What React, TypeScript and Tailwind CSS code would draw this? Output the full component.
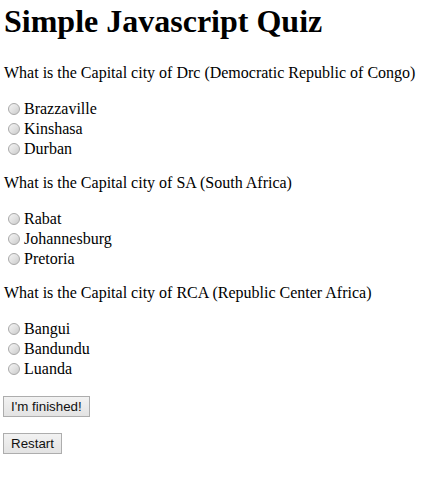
import { useState } from "react";

type Question = { text: string; name: string; options: string[] };

const questions: Question[] = [
  {
    text: "What is the Capital city of Drc (Democratic Republic of Congo)",
    name: "q1",
    options: ["Brazzaville", "Kinshasa", "Durban"],
  },
  {
    text: "What is the Capital city of SA (South Africa)",
    name: "q2",
    options: ["Rabat", "Johannesburg", "Pretoria"],
  },
  {
    text: "What is the Capital city of RCA (Republic Center Africa)",
    name: "q3",
    options: ["Bangui", "Bandundu", "Luanda"],
  },
];

// old-style grey radio bubble
const Radio = ({ checked, onClick }: { checked: boolean; onClick: () => void }) => (
  <span
    onClick={onClick}
    className="ml-[4px] mr-[4px] inline-flex h-[12px] w-[12px] shrink-0 items-center justify-center rounded-full border border-[#a9a9a9] bg-gradient-to-br from-[#f4f4f4] via-[#e2e2e2] to-[#c9c9c9]"
  >
    {checked && <span className="h-[4px] w-[4px] rounded-full bg-[#222]" />}
  </span>
);

const Button = ({ label, onClick }: { label: string; onClick: () => void }) => (
  <button
    onClick={onClick}
    className="h-[21px] border border-[#adadad] bg-gradient-to-b from-[#f2f2f2] to-[#e3e3e3] px-[7px] text-[13.33px] leading-[17px] text-[#111] [font-family:'Liberation_Sans',Arial,sans-serif]"
  >
    {label}
  </button>
);

export default function App() {
  const [answers, setAnswers] = useState<Record<string, string>>({});

  return (
    <div className="min-h-[494px] bg-white pl-[4px] pt-[3px] text-black [font-family:'Liberation_Serif','Times_New_Roman',serif]">
      <h1 className="text-[32px] font-bold leading-[36px]">Simple Javascript Quiz</h1>
      <div className="mt-[24px] flex flex-col gap-[14px]">
        {questions.map((q) => (
          <div key={q.name} className="flex flex-col gap-[16px]">
            <p className="text-[16px] leading-[20px]">{q.text}</p>
            <div className="flex flex-col">
              {q.options.map((opt) => (
                <label key={opt} className="flex h-[20px] items-center text-[16px] leading-[20px]">
                  <Radio
                    checked={answers[q.name] === opt}
                    onClick={() => setAnswers({ ...answers, [q.name]: opt })}
                  />
                  <span>{opt}</span>
                </label>
              ))}
            </div>
          </div>
        ))}
      </div>
      <div className="-ml-px mt-[17px] flex flex-col items-start gap-[16px]">
        <Button label="I'm finished!" onClick={() => {}} />
        <Button label="Restart" onClick={() => setAnswers({})} />
      </div>
    </div>
  );
}
